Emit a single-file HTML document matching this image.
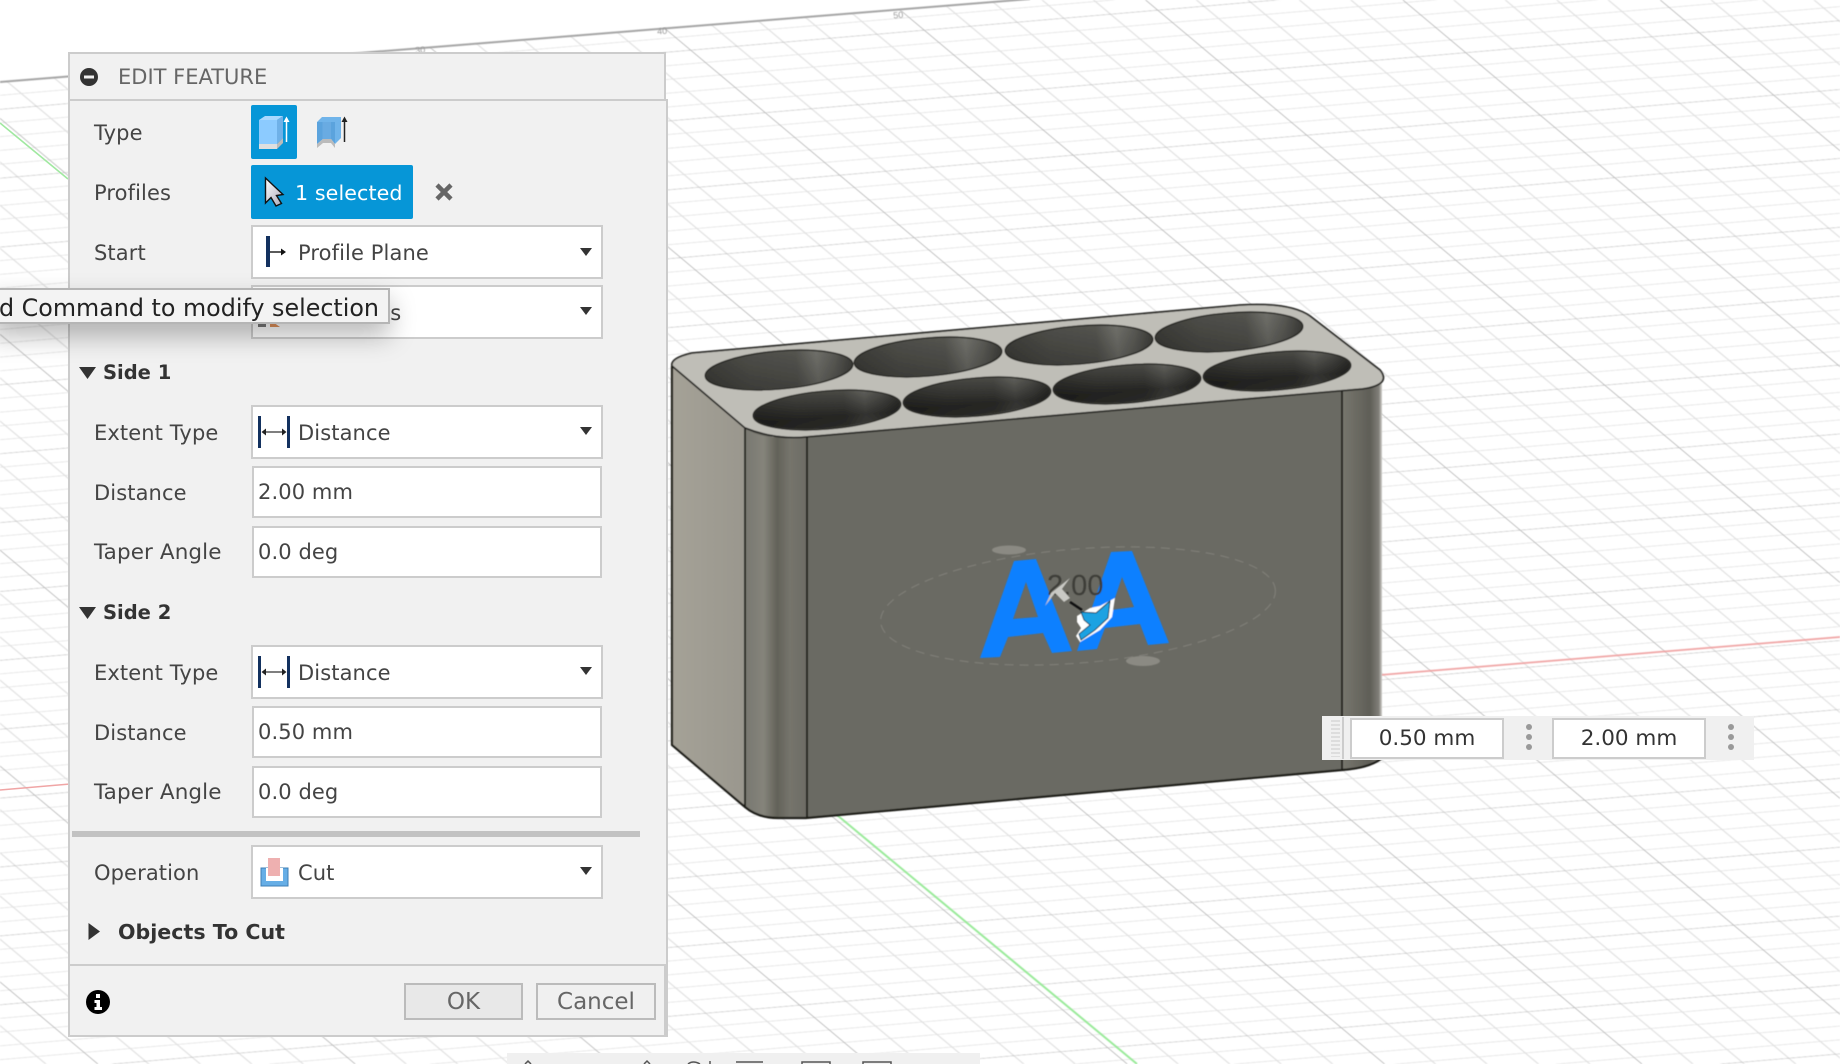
<!DOCTYPE html>
<html><head><meta charset="utf-8"><style>
html,body{margin:0;padding:0;background:#fff}
#r{position:relative;width:1840px;height:1064px;overflow:hidden;background:#fff;font-family:"DejaVu Sans","Liberation Sans",sans-serif;color:#444}
#r div{position:absolute;box-sizing:border-box}
svg{position:absolute;left:0;top:0;display:block}
.t{font-size:21px;line-height:30px;height:30px;white-space:nowrap;color:#444;margin-top:1px;letter-spacing:.1px}
.sel{left:251px;width:352px;height:54px;background:#fff;border:2px solid #ccc}
.inp{left:252px;width:350px;height:52px;background:#fff;border:2px solid #ccc}
.b{font-size:19.500px;font-weight:bold;line-height:30px;height:30px;white-space:nowrap;color:#333}
.btn{top:983px;height:37px;border:2px solid #bbb;font-size:23px;line-height:34px;text-align:center;color:#666}
.dim{top:718px;width:154px;height:41px;background:#fff;border:2px solid #ccc;font-size:21.500px;line-height:37px;text-align:center;color:#333}
</style></head><body><div id="r">
<svg width="1840" height="1064" viewBox="0 0 1840 1064">
<defs>
<pattern id="g" width="100" height="100" patternUnits="userSpaceOnUse" patternTransform="matrix(2.335 -0.2 0.745 0.625 1306 135)">
<g fill="none" stroke="#e0e0e0" stroke-width="0.7">
<path d="M20 0V100M40 0V100M60 0V100M80 0V100"/>
<path d="M0 20H100M0 40H100M0 60H100M0 80H100" stroke-width="1.1"/>
</g>
<path d="M0 0V100" stroke="#a8a8a8" stroke-width="0.8" fill="none"/>
<path d="M0 0H100" stroke="#b0b0b0" stroke-width="1.300" fill="none"/>
</pattern>
<clipPath id="c"><path d="M0 82L1025 0H1840V1064H0Z"/></clipPath>
<filter id="s" x="-5%" y="-5%" width="110%" height="110%"><feGaussianBlur stdDeviation="0.55"/></filter>
<linearGradient id="lf" x1="0" x2="1" y1="0" y2="0"><stop offset="0" stop-color="#a5a297"/><stop offset="1" stop-color="#9a978e"/></linearGradient>
<linearGradient id="cn" x1="0" x2="1" y1="0" y2="0"><stop offset="0" stop-color="#787770"/><stop offset=".3" stop-color="#85847b"/><stop offset=".52" stop-color="#636259"/><stop offset=".72" stop-color="#75746c"/><stop offset="1" stop-color="#6d6c65"/></linearGradient>
<linearGradient id="rt" x1="0" x2="1" y1="0" y2="0"><stop offset="0" stop-color="#77766e"/><stop offset=".4" stop-color="#6a6961"/><stop offset=".7" stop-color="#5f5e57"/><stop offset=".92" stop-color="#807f78"/><stop offset="1" stop-color="#d0d0cb"/></linearGradient>
<linearGradient id="ho" x1="0" x2="1" y1="0" y2="0"><stop offset="0" stop-color="#3c3c38"/><stop offset=".3" stop-color="#4d4d48"/><stop offset=".62" stop-color="#54544f"/><stop offset=".76" stop-color="#71716b"/><stop offset=".88" stop-color="#5c5c57"/><stop offset="1" stop-color="#3e3e3a"/></linearGradient>
<linearGradient id="vb" x1="0" x2="0" y1="0" y2="1"><stop offset="0" stop-color="#000" stop-opacity="0"/><stop offset="1" stop-color="#000" stop-opacity=".22"/></linearGradient>
<linearGradient id="vf" x1="0" x2="0" y1="0" y2="1"><stop offset="0" stop-color="#000" stop-opacity=".12"/><stop offset=".7" stop-color="#000" stop-opacity=".55"/><stop offset="1" stop-color="#000" stop-opacity=".5"/></linearGradient>
<linearGradient id="cur" x1="0" x2="1" y1="0" y2="1"><stop offset="0" stop-color="#fff"/><stop offset="1" stop-color="#aab"/></linearGradient>
</defs>
<g clip-path="url(#c)">
<rect width="1840" height="1064" fill="url(#g)" filter="url(#s)"/>
</g>
<path d="M0 82L1030 -1" stroke="#a5a5a5" stroke-width="2" fill="none" filter="url(#s)"/>
<g font-size="9" fill="#999" font-family="Liberation Sans,sans-serif" filter="url(#s)">
<text x="415" y="53" transform="rotate(-5 421 48)">30</text>
<text x="657" y="34" transform="rotate(-5 663 30)">40</text>
<text x="893" y="18" transform="rotate(-5 899 13)">50</text>
</g>
<path d="M0 123L68 179" stroke="#a0e8a0" stroke-width="1.6" fill="none"/>
<path d="M0 790L70 784" stroke="#f0a5a5" stroke-width="1.6" fill="none"/>
<path d="M1380 675L1840 637" stroke="#f0a5a5" stroke-width="1.8" fill="none" filter="url(#s)"/>
<path d="M837 815L1137 1064" stroke="#9aea9a" stroke-width="2" fill="none" filter="url(#s)"/>

<g filter="url(#s)">
<path d="M672 365V745L745 807Q758 818 778 818H806L1342 770Q1372 768 1382 758V376L1368 387L806 437H773L745 428Z" fill="#6b6b63"/>
<path d="M672 365V745L745 807V428Z" fill="url(#lf)"/>
<path d="M745 428Q758 437 775 437H807V817H778Q758 818 745 807Z" fill="url(#cn)"/>
<path d="M1342 391L1368 387L1382 376V758Q1372 768 1342 770Z" fill="url(#rt)"/>
<path d="M672 366Q670 358 692 353L1240 305Q1290 302 1310 316L1380 370Q1392 385 1362 389L806 437Q775 440 745 428Z" fill="#bfbeb7" stroke="#2a2a28" stroke-width="1.800"/>
<path d="M672 366V745L745 807Q758 818 778 818H806L1342 770Q1370 768 1382 758" fill="none" stroke="#1c1c19" stroke-width="2.200"/>
<path d="M745 428V807M807 437V817M1342 391V770" fill="none" stroke="#1a1a17" stroke-width="1.800"/>
<g stroke="#262623" stroke-width="1.500" fill="url(#ho)">
<ellipse cx="779" cy="370" rx="74" ry="19" transform="rotate(-4.7 779 370)"/>
<ellipse cx="928" cy="357" rx="74" ry="19" transform="rotate(-4.7 928 357)"/>
<ellipse cx="1079" cy="345" rx="74" ry="19" transform="rotate(-4.7 1079 345)"/>
<ellipse cx="1229" cy="332" rx="74" ry="19" transform="rotate(-4.7 1229 332)"/>
<ellipse cx="827" cy="410" rx="74" ry="19" transform="rotate(-4.7 827 410)"/>
<ellipse cx="977" cy="397" rx="74" ry="19" transform="rotate(-4.7 977 397)"/>
<ellipse cx="1127" cy="384" rx="74" ry="19" transform="rotate(-4.7 1127 384)"/>
<ellipse cx="1277" cy="371" rx="74" ry="19" transform="rotate(-4.7 1277 371)"/>
</g>
<g fill="url(#vb)">
<ellipse cx="779" cy="370" rx="73" ry="18" transform="rotate(-4.7 779 370)"/>
<ellipse cx="928" cy="357" rx="73" ry="18" transform="rotate(-4.7 928 357)"/>
<ellipse cx="1079" cy="345" rx="73" ry="18" transform="rotate(-4.7 1079 345)"/>
<ellipse cx="1229" cy="332" rx="73" ry="18" transform="rotate(-4.7 1229 332)"/>
</g>
<g fill="url(#vf)">
<ellipse cx="827" cy="410" rx="73" ry="18" transform="rotate(-4.7 827 410)"/>
<ellipse cx="977" cy="397" rx="73" ry="18" transform="rotate(-4.7 977 397)"/>
<ellipse cx="1127" cy="384" rx="73" ry="18" transform="rotate(-4.7 1127 384)"/>
<ellipse cx="1277" cy="371" rx="73" ry="18" transform="rotate(-4.7 1277 371)"/>
</g>
</g>

<g filter="url(#s)">
<ellipse cx="1078" cy="606" rx="198" ry="57" transform="rotate(-4.7 1078 606)" fill="none" stroke="#82817a" stroke-width="1" stroke-dasharray="9 6"/>
<ellipse cx="1009" cy="550" rx="17" ry="4.500" fill="#8b8a83"/>
<ellipse cx="1143" cy="661" rx="17" ry="5" fill="#8b8a83"/>
<path fill-rule="evenodd" fill="#0a80ff" d="M980 658L1014 561L1036 559L1072 651L1052 653L1043 633L1008 637L1000 657ZM1026 582L1013 619L1038 617Z"/>
<path fill-rule="evenodd" fill="#0a80ff" d="M1077 651L1111 552L1132 551L1169 643L1148 645L1140 624L1105 628L1097 649ZM1122 577L1111 610L1134 607Z"/>
<text x="1047" y="595" font-size="29" fill="#3c3c38" font-family="Liberation Sans,sans-serif">2.00</text>
<path d="M1045 606L1051 593L1070 578L1062 589L1070 598L1064 602L1055 593Z" fill="#c9c9c4"/>
<path d="M1070 602L1082 610" stroke="#111" stroke-width="2.500" fill="none"/>
<path d="M1077 616L1090 608L1100 606L1115 598L1112 617L1100 630L1080 642L1076 636L1081 628L1077 622Z" fill="#fff"/>
<path d="M1081 612L1096 613L1110 601L1108 618L1095 630L1081 640L1079 634L1090 625L1084 620Z" fill="#1aa2e2" stroke="#0c3550" stroke-width="1"/>
</g>
<rect x="507" y="1053" width="473" height="11" fill="#f0f0f0"/>
<g fill="none" stroke="#555" stroke-width="1.500">
<path d="M525 1064L528 1061L531 1064M644 1064L647 1061L650 1064M688 1064Q693 1060 700 1064M710 1061V1064M736 1062H763M802 1064V1062H830V1064M863 1064V1062H891V1064"/>
</g>
</svg>

<!-- Dimension inputs -->
<div style="left:1322px;top:716px;width:432px;height:44px;background:#f0f0f0"></div>
<div style="left:1331px;top:720px;width:9px;height:37px;background:repeating-linear-gradient(180deg,#ddd 0 2px,#f0f0f0 2px 4px)"></div>
<div style="left:1342px;top:717px;width:2px;height:42px;background:#ccc"></div>
<div class="dim" style="left:1350px">0.50 mm</div>
<div class="dim" style="left:1552px">2.00 mm</div>
<svg width="1840" height="1064" style="pointer-events:none"><g fill="#999"><circle cx="1529" cy="727" r="3"/><circle cx="1529" cy="737" r="3"/><circle cx="1529" cy="747" r="3"/><circle cx="1731" cy="727" r="3"/><circle cx="1731" cy="737" r="3"/><circle cx="1731" cy="747" r="3"/></g></svg>

<!-- Panel -->
<div style="left:68px;top:99px;width:600px;height:938px;background:#f1f1f1;border:2px solid #ccc"></div>
<div style="left:68px;top:52px;width:598px;height:49px;background:#f1f1f1;border:2px solid #ccc"></div>
<div style="left:68px;top:964px;width:598px;height:73px;background:#f1f1f1;border:2px solid #ccc"></div>
<div style="left:118px;top:62px;font-size:21px;line-height:30px;color:#666;white-space:nowrap">EDIT FEATURE</div>

<div class="t" style="left:94px;top:117px">Type</div>
<div style="left:251px;top:105px;width:46px;height:54px;background:#0696d7;border-radius:2px"></div>
<div class="t" style="left:94px;top:177px">Profiles</div>
<div style="left:251px;top:165px;width:162px;height:54px;background:#0696d7;border-radius:2px"></div>
<div class="t" style="left:295px;top:177px;color:#fff;font-size:20.600px">1 selected</div>
<div class="t" style="left:94px;top:237px">Start</div>
<div class="sel" style="top:225px"></div>
<div class="t" style="left:298px;top:237px">Profile Plane</div>
<div class="sel" style="top:285px"></div>
<div class="t" style="left:298px;top:297px">Two Sides</div>
<div class="b" style="left:103px;top:358px">Side 1</div>
<div class="t" style="left:94px;top:417px">Extent Type</div>
<div class="sel" style="top:405px"></div>
<div class="t" style="left:298px;top:417px">Distance</div>
<div class="t" style="left:94px;top:477px">Distance</div>
<div class="inp" style="top:466px"></div>
<div class="t" style="left:258px;top:476px">2.00 mm</div>
<div class="t" style="left:94px;top:537px;font-size:21.500px">Taper Angle</div>
<div class="inp" style="top:526px"></div>
<div class="t" style="left:258px;top:536px">0.0 deg</div>
<div class="b" style="left:103px;top:598px">Side 2</div>
<div class="t" style="left:94px;top:657px">Extent Type</div>
<div class="sel" style="top:645px"></div>
<div class="t" style="left:298px;top:657px">Distance</div>
<div class="t" style="left:94px;top:717px">Distance</div>
<div class="inp" style="top:706px"></div>
<div class="t" style="left:258px;top:716px">0.50 mm</div>
<div class="t" style="left:94px;top:777px;font-size:21.500px">Taper Angle</div>
<div class="inp" style="top:766px"></div>
<div class="t" style="left:258px;top:776px">0.0 deg</div>
<div style="left:72px;top:831px;width:568px;height:6px;background:#c2c2c2"></div>
<div class="t" style="left:94px;top:857px">Operation</div>
<div class="sel" style="top:845px"></div>
<div class="t" style="left:298px;top:857px">Cut</div>
<div class="b" style="left:118px;top:917px;font-size:20.600px">Objects To Cut</div>
<div class="btn" style="left:404px;width:119px;background:#e8e8e8">OK</div>
<div class="btn" style="left:536px;width:120px;background:#f0f0f0">Cancel</div>

<svg width="1840" height="1064">
<circle cx="89" cy="77" r="9" fill="#333"/><rect x="84" y="75.500" width="10" height="3" fill="#f1f1f1"/>
<!-- solid icon -->
<path d="M259 120L265 116H283L277 120Z" fill="#a9d9ff"/>
<path d="M259 120H277V144H259Z" fill="#8ccbff"/>
<path d="M277 120L283 116V138L277 144Z" fill="#6fb1e8"/>
<path d="M259 144H277V149H259Z" fill="#dfdfdf"/>
<path d="M277 144L283 138V143L277 149Z" fill="#bbb"/>
<path d="M286.500 142V120" stroke="#fff" stroke-width="1.500"/><path d="M283.500 122L286.500 116.500L289.500 122Z" fill="#fff"/>
<!-- surface icon -->
<path d="M317 122L322 117H341V138L335 144V122H317Z" fill="#70b4ea"/>
<path d="M317 122H335V144L331 139H323L317 144Z" fill="#5ba3dd"/>
<path d="M322.500 122V139H331V122Z" fill="#69abe2"/>
<path d="M317 144L323 139H331L335 144V148L331 143H323L317 148Z" fill="#bbb"/>
<path d="M344.500 142V120" stroke="#222" stroke-width="1.500"/><path d="M341.500 122L344.500 116.500L347.500 122Z" fill="#222"/>
<!-- cursor -->
<path d="M265.500 178V203L271 197.500L276 206L281.500 203.500L276.500 195.500L283 194.500Z" fill="url(#cur)" stroke="#111" stroke-width="1.400"/>
<!-- x -->
<path d="M437 185L451 199M451 185L437 199" stroke="#666" stroke-width="4.500" fill="none"/>
<!-- start icon -->
<rect x="266" y="236" width="4" height="31" fill="#13315f"/>
<path d="M270 252H282" stroke="#222" stroke-width="1.500"/><path d="M281 248.500L286 252L281 255.500Z" fill="#111"/>
<!-- dropdown triangles -->
<g fill="#333"><path d="M580 248H592L586 256Z"/><path d="M580 307H592L586 315Z"/><path d="M580 427H592L586 435Z"/><path d="M580 667H592L586 675Z"/><path d="M580 867H592L586 875Z"/></g>
<!-- direction icon peek -->
<path d="M258 320H266V327H258Z" fill="#777"/><path d="M270 320L280 327H270Z" fill="#e0905a"/>
<!-- distance icons -->
<g><rect x="258" y="416" width="3" height="32" fill="#13315f"/><rect x="287" y="416" width="3" height="32" fill="#13315f"/>
<path d="M263 432H285" stroke="#333" stroke-width="1.300"/><path d="M261.500 432L266 428.500V435.500ZM286.500 432L282 428.500V435.500Z" fill="#222"/></g>
<g><rect x="258" y="656" width="3" height="32" fill="#13315f"/><rect x="287" y="656" width="3" height="32" fill="#13315f"/>
<path d="M263 672H285" stroke="#333" stroke-width="1.300"/><path d="M261.500 672L266 668.500V675.500ZM286.500 672L282 668.500V675.500Z" fill="#222"/></g>
<!-- section triangles -->
<g fill="#333"><path d="M79 367H96L87.500 379Z"/><path d="M79 607H96L87.500 619Z"/><path d="M88.500 923L100 931.500L88.500 940Z"/></g>
<!-- cut icon -->
<path d="M261 868H288V886H261Z" fill="#66aee6" stroke="#3d7fb5" stroke-width="1"/>
<rect x="266" y="868" width="17" height="13" fill="#fff"/>
<rect x="268" y="858" width="12" height="18" fill="#eeb0b0"/>
<!-- info -->
<circle cx="98" cy="1002" r="12" fill="#000"/>
<rect x="96" y="994" width="4" height="4" fill="#fff"/><path d="M94.500 1000H100V1007H102V1010H94.500V1007H96.500V1003H94.500Z" fill="#fff"/>
</svg>

<!-- Tooltip -->
<div style="left:-10px;top:288px;width:400px;height:36px;background:#f3f3f3;border:2px solid #b5b5b5;box-shadow:0 12px 26px rgba(0,0,0,.28)"></div>
<div style="left:-1px;top:291.500px;font-size:23.800px;line-height:32px;color:#222;white-space:nowrap">d Command to modify selection</div>
</div></body></html>
